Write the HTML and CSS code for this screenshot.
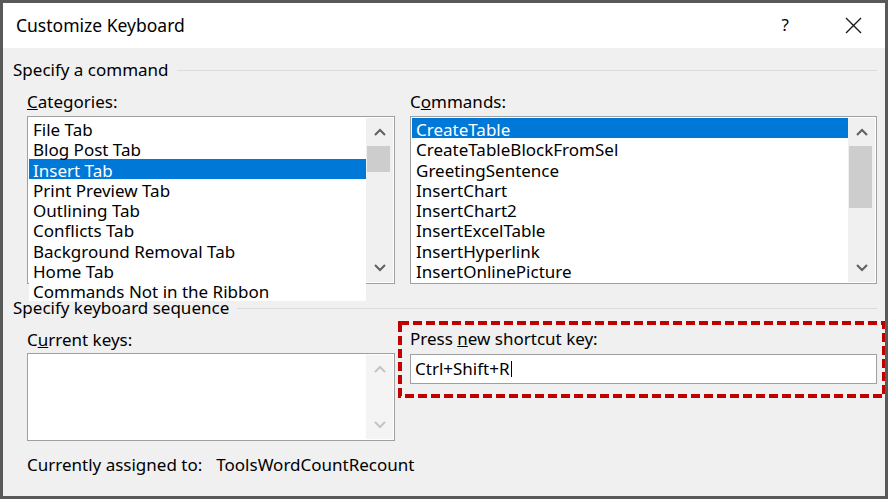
FILE: index.html
```html
<!DOCTYPE html>
<html lang="en">
<head>
    <meta charset="UTF-8">
    <title>Customize Keyboard</title>
    <link rel="stylesheet" href="styles.css">
</head>
<body>
<div class="dialog">

    <!-- Title bar -->
    <div class="titlebar">
        <span class="title">Customize Keyboard</span>
        <span class="help">?</span>
        <svg class="close" width="17" height="17" viewBox="0 0 17 17">
            <path d="M1 1 L16 16 M16 1 L1 16" stroke="#1a1a1a" stroke-width="1.4" fill="none"/>
        </svg>
    </div>

    <div class="content">
        <!-- Specify a command -->
        <div class="group-title">Specify a command</div>
        <div class="columns">
            <div class="col">
                <div class="label"><u>C</u>ategories:</div>
                <div class="listbox">
                    <ul class="items">
                        <li>File Tab</li>
                        <li>Blog Post Tab</li>
                        <li class="selected">Insert Tab</li>
                        <li>Print Preview Tab</li>
                        <li>Outlining Tab</li>
                        <li>Conflicts Tab</li>
                        <li>Background Removal Tab</li>
                        <li>Home Tab</li>
                        <li>Commands Not in the Ribbon</li>
                    </ul>
                    <div class="scrollbar">
                        <div class="arrow up"><svg width="12" height="8" viewBox="0 0 12 8"><path d="M1 7 L6 2 L11 7" stroke="#606060" stroke-width="2" fill="none"/></svg></div>
                        <div class="thumb small"></div>
                        <div class="spacer"></div>
                        <div class="arrow down"><svg width="12" height="8" viewBox="0 0 12 8"><path d="M1 1 L6 6 L11 1" stroke="#606060" stroke-width="2" fill="none"/></svg></div>
                    </div>
                </div>
            </div>
            <div class="col">
                <div class="label">C<u>o</u>mmands:</div>
                <div class="listbox">
                    <ul class="items">
                        <li class="selected">CreateTable</li>
                        <li>CreateTableBlockFromSel</li>
                        <li>GreetingSentence</li>
                        <li>InsertChart</li>
                        <li>InsertChart2</li>
                        <li>InsertExcelTable</li>
                        <li>InsertHyperlink</li>
                        <li>InsertOnlinePicture</li>
                    </ul>
                    <div class="scrollbar">
                        <div class="arrow up"><svg width="12" height="8" viewBox="0 0 12 8"><path d="M1 7 L6 2 L11 7" stroke="#606060" stroke-width="2" fill="none"/></svg></div>
                        <div class="thumb large"></div>
                        <div class="spacer"></div>
                        <div class="arrow down"><svg width="12" height="8" viewBox="0 0 12 8"><path d="M1 1 L6 6 L11 1" stroke="#606060" stroke-width="2" fill="none"/></svg></div>
                    </div>
                </div>
            </div>
        </div>

        <!-- Specify keyboard sequence -->
        <div class="group-title second">Specify keyboard sequence</div>
        <div class="columns keys">
            <div class="col">
                <div class="label">C<u>u</u>rrent keys:</div>
                <div class="keybox">
                    <div class="items"></div>
                    <div class="scrollbar disabled">
                        <div class="arrow up"><svg width="12" height="8" viewBox="0 0 12 8"><path d="M1 7 L6 2 L11 7" stroke="#c4c4c4" stroke-width="2" fill="none"/></svg></div>
                        <div class="spacer"></div>
                        <div class="arrow down"><svg width="12" height="8" viewBox="0 0 12 8"><path d="M1 1 L6 6 L11 1" stroke="#c4c4c4" stroke-width="2" fill="none"/></svg></div>
                    </div>
                </div>
            </div>
            <div class="col shortcut">
                <div class="label">Press <u>n</u>ew shortcut key:</div>
                <div class="input">Ctrl+Shift+R<span class="caret"></span></div>
                <!-- annotation box -->
                <svg class="highlight" width="488" height="77" viewBox="0 0 488 77">
                    <rect x="2" y="2" width="484" height="73" fill="none" stroke="#c00000" stroke-width="4" stroke-dasharray="9 4"/>
                </svg>
            </div>
        </div>

        <div class="assigned">
            <span>Currently assigned to:</span>
            <span class="assigned-value">ToolsWordCountRecount</span>
        </div>
    </div>
</div>
</body>
</html>
```

FILE: styles.css
```css
/* General */
body {
    margin: 0;
    background: #595959;
}

.dialog {
    width: 888px;
    height: 499px;
    box-sizing: border-box;
    border: 3px solid #595959;
    background-color: #f0f0f0;
    font-family: "Noto Sans", "Open Sans", sans-serif;
    font-size: 17px;
    color: #000;
    overflow: hidden;
}

/* Title bar */
.titlebar {
    height: 45px;
    background-color: #fff;
    display: flex;
    align-items: center;
}

.title {
    padding-left: 13px;
    padding-bottom: 2px;
    flex: 1;
    font-size: 17.5px;
}

.help {
    font-size: 17px;
    margin-right: 56px;
    padding-bottom: 2px;
}

.close {
    margin-right: 23px;
}

/* Content */
.content {
    padding: 0 8px 0 10px;
}

.group-title {
    display: flex;
    align-items: center;
    gap: 8px;
    line-height: 20px;
    margin-top: 12px;
}

.group-title::after {
    content: "";
    flex: 1;
    height: 1px;
    background-color: #dcdcdc;
}

.group-title.second {
    margin-top: 14px;
    line-height: 14px;
    padding-top: 3px;
    padding-bottom: 3px;
}

.columns {
    display: grid;
    grid-template-columns: 368px 467px;
    column-gap: 15px;
    padding-left: 14px;
    margin-top: 12px;
}

.label {
    line-height: 20px;
}

/* List boxes */
.listbox, .keybox {
    display: flex;
    box-sizing: border-box;
    height: 168px;
    margin-top: 4px;
    border: 1px solid #a0a0a0;
    background-color: #fff;
    padding: 1px;
}

.items {
    flex: 1;
    list-style: none;
    margin: 0;
    padding: 0;
    align-self: flex-start;
    background-color: #fff;
    position: relative;
}

.items li {
    box-sizing: border-box;
    height: 20.3px;
    padding-top: 3px;
    line-height: 17.3px;
    padding-left: 4px;
    white-space: nowrap;
}

.items li.selected {
    background-color: #0078d7;
    color: #fff;
}

.scrollbar {
    width: 27px;
    display: flex;
    flex-direction: column;
    background-color: #f0f0f0;
}

.arrow {
    height: 28px;
    display: flex;
    align-items: center;
    justify-content: center;
}

.thumb {
    margin: 0 3px 0 1px;
    background-color: #cdcdcd;
}

.thumb.small {
    height: 26px;
}

.thumb.large {
    height: 62px;
}

.spacer {
    flex: 1;
}

/* Keyboard sequence */
.keys {
    margin-top: 12px;
}

.keybox {
    height: 88px;
    margin-top: 3px;
}

.keybox .items {
    align-self: stretch;
}

.scrollbar.disabled {
    background-color: #f4f4f4;
}

.shortcut {
    position: relative;
}

.shortcut .label {
    margin-top: -1px;
}

.input {
    box-sizing: border-box;
    height: 30px;
    margin-top: 5px;
    border: 1px solid #a0a0a0;
    background-color: #fff;
    padding-left: 4px;
    line-height: 28px;
    display: flex;
    align-items: center;
}

.caret {
    display: inline-block;
    width: 1px;
    height: 16px;
    background-color: #000;
    margin-left: 1px;
}

.highlight {
    position: absolute;
    left: -12px;
    top: -9px;
}

.assigned {
    display: flex;
    padding-left: 14px;
    margin-top: 14px;
    line-height: 20px;
}

.assigned-value {
    margin-left: 14px;
}
```
